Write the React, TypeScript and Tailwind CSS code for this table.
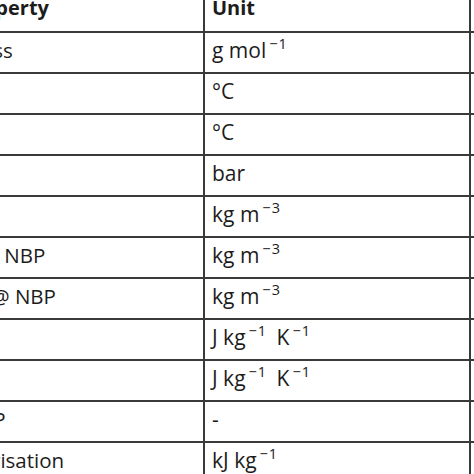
const font = { fontFamily: '"Open Sans", "Noto Sans", sans-serif' }

type Row = { property: string; unit: React.ReactNode }

const Sup = ({ children }: { children: React.ReactNode }) => (
  <sup className="text-[14.5px] top-[-0.6em] ml-[3px] mr-[4px] tracking-[1px]">{children}</sup>
)

const rows: Row[] = [
  { property: "Mean molar mass", unit: <>g mol<Sup>−1</Sup></> },
  { property: "Melting point", unit: "°C" },
  { property: "Boiling point", unit: "°C" },
  { property: "Critical pressure", unit: "bar" },
  { property: "Critical density", unit: <>kg m<Sup>−3</Sup></> },
  { property: "Liquid density @ NBP", unit: <>kg m<Sup>−3</Sup></> },
  { property: "Vapour density @ NBP", unit: <>kg m<Sup>−3</Sup></> },
  { property: "Specific heat cp", unit: <>J kg<Sup>−1</Sup> K<Sup>−1</Sup></> },
  { property: "Specific heat cv", unit: <>J kg<Sup>−1</Sup> K<Sup>−1</Sup></> },
  { property: "γ = cp / cv @ NBP", unit: "-" },
  { property: "Energy for vaporisation", unit: <>kJ kg<Sup>−1</Sup></> },
]

export default function App() {
  return (
    <div className="w-[474px] h-[474px] overflow-hidden bg-white text-[#1c1c1c]" style={font}>
      <div className="-mt-[8px] -ml-[166px] w-[720px] text-[20.5px]">
        {/* Header */}
        <div className="flex h-[41px] border-b-2 border-[#3a3a3a] font-bold text-[20px]">
          <div className="w-[371px] shrink-0 border-r-2 border-[#3a3a3a] pl-[8px] pt-[2px] leading-[27px] whitespace-nowrap">
            Refrigerant property
          </div>
          <div className="w-[266px] shrink-0 border-r-2 border-[#3a3a3a] pl-[7px] pt-[2px] leading-[27px]">
            Unit
          </div>
          <div className="flex-1" />
        </div>

        {rows.map((r, i) => (
          <div key={i} className="flex h-[41px] border-b-2 border-[#3a3a3a]">
            <div className="w-[371px] shrink-0 border-r-2 border-[#3a3a3a] pl-[8px] pt-[4px] leading-[27px] whitespace-nowrap">
              {r.property}
            </div>
            <div className="w-[266px] shrink-0 border-r-2 border-[#3a3a3a] pl-[7px] pt-[4px] leading-[27px] whitespace-nowrap text-[21px]">
              {r.unit}
            </div>
            <div className="flex-1" />
          </div>
        ))}
      </div>
    </div>
  )
}
